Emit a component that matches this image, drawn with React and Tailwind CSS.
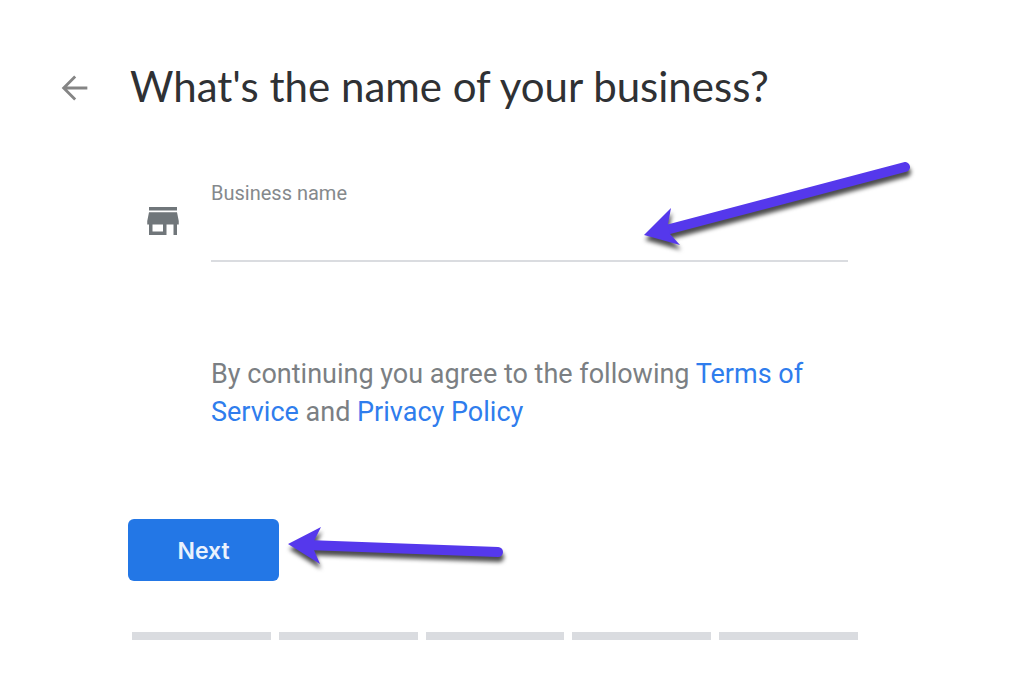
const STEPS = ["name", "location", "category", "contact", "finish"];

function BackIcon() {
  return (
    <svg viewBox="0 0 24 24" className="size-10" fill="currentColor" aria-hidden="true">
      <path d="M20 11.1H7.9l5.4-5.4L12.1 4.5 4.6 12l7.5 7.5 1.2-1.2-5.4-5.4H20v-1.8z" />
    </svg>
  );
}

function StoreIcon() {
  return (
    <svg viewBox="0 0 24 24" className="size-[42px] shrink-0 text-[#70767a]" fill="currentColor" aria-hidden="true">
      <path d="M20 4H4v2h16V4zm1 10v-2l-1-5H4l-1 5v2h1v6h10v-6h4v6h2v-6h1zm-9 4H6v-4h6v4z" />
    </svg>
  );
}

function FieldArrow() {
  return (
    <svg
      viewBox="0 0 280 100"
      className="pointer-events-none absolute right-[-70px] bottom-2 h-[100px] w-[280px] fill-[#5538ec] stroke-[#5538ec] drop-shadow-[1px_5px_2px_rgba(0,0,0,0.7)]"
      aria-hidden="true"
    >
      <path d="M267 13L28 76" strokeWidth="10" strokeLinecap="round" />
      <path d="M6 81L33 54L30 70L32 80L42 91Z" stroke="none" />
    </svg>
  );
}

function ButtonArrow() {
  return (
    <svg
      viewBox="0 0 230 60"
      className="pointer-events-none absolute top-0 left-full h-[60px] w-[230px] fill-[#5538ec] stroke-[#5538ec] drop-shadow-[1px_5px_2px_rgba(0,0,0,0.7)]"
      aria-hidden="true"
    >
      <path d="M219 33L28 26" strokeWidth="10" strokeLinecap="round" />
      <path d="M9 25L42 8L35 22L35 31L41 45Z" stroke="none" />
    </svg>
  );
}

export default function App() {
  return (
    <main className="min-h-screen bg-white px-[54px] pt-16 pb-14 font-['Roboto',sans-serif] text-[#7b7f83]">
      <header className="flex h-12 items-center gap-9">
        <button type="button" aria-label="Back" className="text-[#858585]">
          <BackIcon />
        </button>
        <h1 className="pb-1 font-['Lato',sans-serif] text-[42px] leading-[48px] text-[#2f3134]">
          What's the name of your business?
        </h1>
      </header>

      <form className="mt-[68px] ml-[74px] max-w-[730px]" onSubmit={(e) => e.preventDefault()}>
        <div className="flex items-center gap-[27px] pr-[10px] pl-[14px]">
          <StoreIcon />
          <div className="relative flex-1">
            <label htmlFor="business-name" className="block text-[20px] leading-[26px] text-[#85898c]">
              Business name
            </label>
            <input
              id="business-name"
              type="text"
              className="block h-14 w-full border-b-2 border-[#dadce0] text-[27px] text-[#2f3134] outline-none"
            />
            <FieldArrow />
          </div>
        </div>

        <p className="mt-[93px] pl-[83px] text-[27px] leading-[38px]">
          By continuing you agree to the following{" "}
          <a href="#terms" className="text-[#2f7ded]">Terms of Service</a> and{" "}
          <a href="#privacy" className="text-[#2f7ded]">Privacy Policy</a>
        </p>

        <div className="relative mt-[88px] w-fit">
          <button
            type="submit"
            className="h-[62px] w-[151px] rounded-md bg-[#2377e6] pt-0.5 font-['Inter',sans-serif] text-[23px] font-semibold text-[#eaf2fd]"
          >
            Next
          </button>
          <ButtonArrow />
        </div>

        <div className="mt-[51px] flex gap-2 pl-1">
          {STEPS.map((step) => (
            <span key={step} className="h-2 flex-1 bg-[#dadce0]" />
          ))}
        </div>
      </form>
    </main>
  );
}
